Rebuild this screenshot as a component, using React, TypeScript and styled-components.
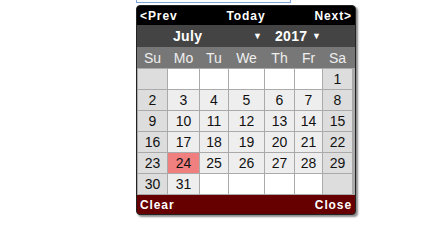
import styled, { createGlobalStyle } from "styled-components";

const GlobalStyle = createGlobalStyle`
  html, body {
    margin: 0;
    padding: 0;
    background: #fff;
    font-family: "Liberation Sans", Arial, sans-serif;
  }
`;

type Day = {
    n?: number
    weekend: boolean
    today?: boolean
};

const weekDays = ["Su", "Mo", "Tu", "We", "Th", "Fr", "Sa"];
const colWidths = [29, 31, 28, 35, 29, 27, 29];

const buildDays = (): Day[] => {
    const days: Day[] = [];
    const firstOffset = 6; // July 1 2017 is a Saturday
    for (let i = 0; i < 42; i++) {
        const col = i % 7;
        const n = i - firstOffset + 1;
        days.push({
            n: n >= 1 && n <= 31 ? n : undefined,
            weekend: col === 0 || col === 6,
            today: n === 24,
        });
    }
    return days;
};

const App = (): JSX.Element => {
    const days = buildDays();
    return (
        <Page>
            <GlobalStyle />
            <InputBox />
            <Calendar>
                <NavBar>
                    <NavLink>&lt;Prev</NavLink>
                    <NavLink>Today</NavLink>
                    <NavLink>Next&gt;</NavLink>
                </NavBar>
                <MonthBar>
                    <Picker $width={124}>
                        <PickerText $pad={35}>July</PickerText>
                        <Arrow>▼</Arrow>
                    </Picker>
                    <Picker $width={49}>
                        <PickerText $pad={3}>2017</PickerText>
                        <Arrow>▼</Arrow>
                    </Picker>
                </MonthBar>
                <WeekHeader>
                    {weekDays.map((d) => (
                        <WeekLabel key={d}>{d}</WeekLabel>
                    ))}
                </WeekHeader>
                <Grid>
                    {days.map((d, i) => (
                        <Cell
                            key={i}
                            $weekend={d.weekend}
                            $empty={d.n === undefined}
                            $today={!!d.today}
                        >
                            {d.n}
                        </Cell>
                    ))}
                </Grid>
                <Footer>
                    <NavLink>Clear</NavLink>
                    <NavLink>Close</NavLink>
                </Footer>
            </Calendar>
        </Page>
    );
};

export default App;

const Page = styled.div`
  display: flex;
  flex-direction: column;
  padding-left: 136px;
  width: 440px;
  height: 231px;
  box-sizing: border-box;
`;

const InputBox = styled.div`
  width: 153px;
  height: 2px;
  border: 1px solid #7ea6dc;
  border-top: none;
`;

const Calendar = styled.div`
  margin-top: 2px;
  width: 218px;
  background: #444;
  border: 1px solid #222;
  border-radius: 4px;
  box-shadow: 2px 2px 2px rgba(0, 0, 0, 0.45);
  overflow: hidden;
  display: flex;
  flex-direction: column;
`;

const NavBar = styled.div`
  display: flex;
  justify-content: space-between;
  align-items: center;
  height: 19px;
  padding: 0 3px;
  background: #000;
`;

const NavLink = styled.span`
  color: #fff;
  font-size: 12px;
  font-weight: bold;
  letter-spacing: 0.9px;
`;

const MonthBar = styled.div`
  display: flex;
  align-items: center;
  height: 22px;
  background: #444;
  padding-left: 1px;
`;

const Picker = styled.div<{ $width: number }>`
  display: flex;
  align-items: center;
  justify-content: space-between;
  width: ${(p) => p.$width}px;
  margin-right: 10px;
`;

const PickerText = styled.span<{ $pad: number }>`
  padding-left: ${(p) => p.$pad}px;
  color: #fff;
  font-size: 14px;
  font-weight: bold;
  letter-spacing: 0.3px;
`;

const Arrow = styled.span`
  color: #fff;
  font-size: 9px;
`;

const WeekHeader = styled.div`
  display: grid;
  grid-template-columns: ${colWidths.map((w) => `${w}px`).join(" ")};
  column-gap: 1px;
  padding: 0 1px;
  height: 21px;
  background: #777;
  align-items: center;
`;

const WeekLabel = styled.span`
  text-align: center;
  color: #eee;
  font-size: 14px;
`;

const Grid = styled.div`
  display: grid;
  grid-template-columns: ${colWidths.map((w) => `${w}px`).join(" ")};
  grid-auto-rows: 20px;
  gap: 1px;
  padding: 1px;
  background: #aaa;
`;

const Cell = styled.div<{ $weekend: boolean; $empty: boolean; $today: boolean }>`
  display: flex;
  align-items: center;
  justify-content: center;
  font-size: 14px;
  color: #111;
  background: ${(p) =>
        p.$today ? "#f08080" : p.$weekend ? "#ddd" : p.$empty ? "#fff" : "#eee"};
`;

const Footer = styled.div`
  display: flex;
  justify-content: space-between;
  align-items: center;
  height: 19px;
  padding: 0 3px;
  background: #600;
`;
